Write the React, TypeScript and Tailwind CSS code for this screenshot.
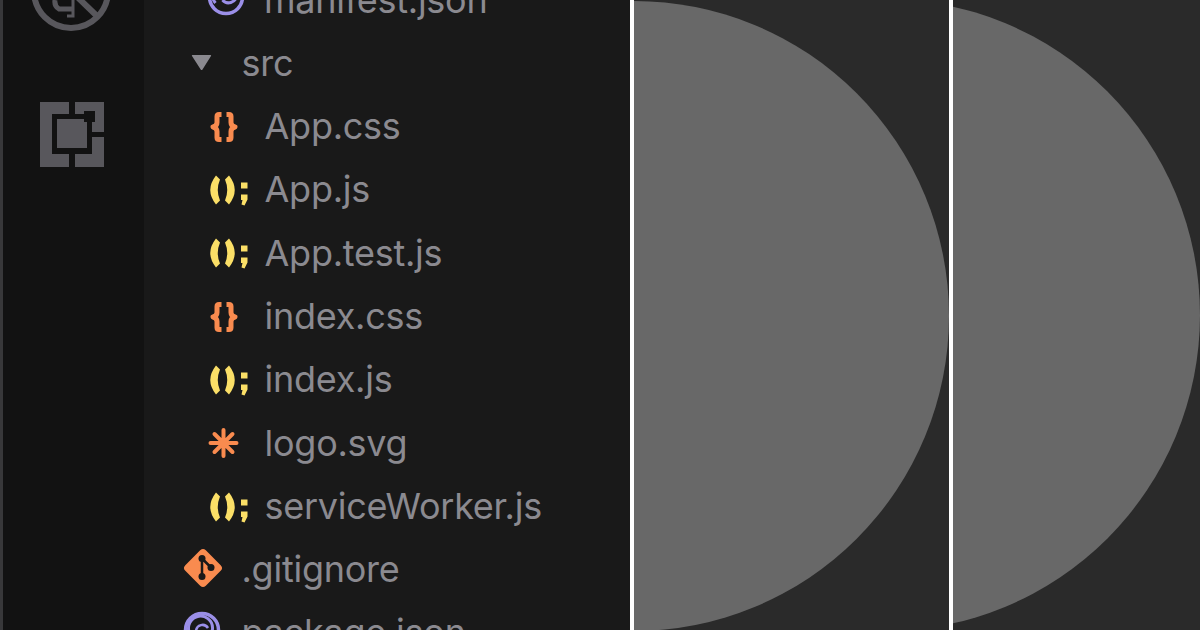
const files = [
  { name: 'manifest.json', icon: 'swirl', indent: 'pl-[63px]', gap: 'w-[57px]' },
  { name: 'src', icon: 'caret', indent: 'pl-[46px]', gap: 'w-[51.500px]' },
  { name: 'App.css', icon: 'css', indent: 'pl-[64px]', gap: 'w-[56.500px]' },
  { name: 'App.js', icon: 'js', indent: 'pl-[64px]', gap: 'w-[56.500px]' },
  { name: 'App.test.js', icon: 'js', indent: 'pl-[64px]', gap: 'w-[56.500px]' },
  { name: 'index.css', icon: 'css', indent: 'pl-[64px]', gap: 'w-[56.500px]' },
  { name: 'index.js', icon: 'js', indent: 'pl-[64px]', gap: 'w-[56.500px]' },
  { name: 'logo.svg', icon: 'star', indent: 'pl-[64px]', gap: 'w-[56.500px]' },
  { name: 'serviceWorker.js', icon: 'js', indent: 'pl-[64px]', gap: 'w-[56.500px]' },
  { name: '.gitignore', icon: 'git', indent: 'pl-[39px]', gap: 'w-[58.500px]' },
  { name: 'package.json', icon: 'swirl', indent: 'pl-[39px]', gap: 'w-[58.500px]' },
]

const FileIcon = ({ icon }: { icon: string }) => {
  if (icon === 'caret') {
    return (
      <svg width="24" height="40" viewBox="0 0 24 40">
        <path d="M2.500 12h18a.6.6 0 0 1 .5 1l-8.500 13.500a1 1 0 0 1-1.800 0L2 13a.6.6 0 0 1 .5-1z" fill="#8a898f" />
      </svg>
    )
  }
  if (icon === 'css') {
    return (
      <svg width="32" height="32" viewBox="0 0 32 32" fill="none" stroke="#f98b4f" strokeWidth="5" strokeLinejoin="round">
        <path d="M13.500 3.500h-2.500q-2 0-2 2v6q0 3.500-4 4.500 4 1 4 4.500v6q0 2 2 2h2.500" />
        <path d="M18.500 3.500h2.500q2 0 2 2v6q0 3.500 4 4.500-4 1-4 4.500v6q0 2-2 2h-2.500" />
      </svg>
    )
  }
  if (icon === 'js') {
    return (
      <svg width="42" height="32" viewBox="0 0 42 32" fill="#fbdf67">
        <path d="M8 1.500l4 4q-4.500 10.500 0 21l-4 4Q-3.500 16 8 1.500z" />
        <path d="M21 1.500l-4 4q4.500 10.500 0 21l4 4Q32.500 16 21 1.500z" />
        <path d="M33 8.500h6.500v6H33zM33 20.500h6.500v5l-3 6-3-1 1-4.500H33z" />
      </svg>
    )
  }
  if (icon === 'star') {
    return (
      <svg width="32" height="32" viewBox="0 0 32 32" stroke="#f98b4f" strokeWidth="4" strokeLinecap="round" fill="#f98b4f">
        <path d="M15.500 3v26M2.500 16h26M6.500 7l18 18M24.500 7l-18 18" />
        <circle cx="15.500" cy="16" r="4" stroke="none" />
      </svg>
    )
  }
  if (icon === 'git') {
    return (
      <svg width="40" height="40" viewBox="0 0 40 40" className="-mt-[4px]">
        <rect x="5.500" y="5.500" width="29" height="29" rx="4" transform="rotate(45 20 20)" fill="#f98b4f" />
        <path d="M19 10.500v18M19 10.500l9 9" stroke="#191919" strokeWidth="2.500" fill="none" />
        <circle cx="19" cy="10.500" r="3.500" fill="#191919" />
        <circle cx="28" cy="19.500" r="3.500" fill="#191919" />
        <circle cx="19" cy="28.500" r="3.500" fill="#191919" />
      </svg>
    )
  }
  return (
    <svg width="38" height="38" viewBox="0 0 38 38" fill="none" stroke="#9b8fe8" className="-mt-[7px]">
      <circle cx="19" cy="19" r="16.500" strokeWidth="3.500" />
      <path d="M8.500 25a12 12 0 1 1 21-7 8 8 0 0 1-14 4" strokeWidth="3" />
      <path d="M13 20a6.500 6.500 0 0 1 12-3" strokeWidth="2.500" />
    </svg>
  )
}

export default function App() {
  return (
    <div className="flex h-[630px] w-[1200px] overflow-hidden bg-black font-['Inter',sans-serif]">
      <div className="h-full w-[3px] bg-[#38383a]" />
      <div className="flex h-full w-[141px] flex-col items-center bg-[#121212]">
        <svg width="84" height="32" viewBox="0 -42 84 74" preserveAspectRatio="xMidYMax slice" className="-ml-[6px] h-[32px] w-[84px]">
          <circle cx="42" cy="-9" r="37" fill="none" stroke="#58575c" strokeWidth="6" />
          <path d="M14 -36L68 16" stroke="#58575c" strokeWidth="6" />
          <path d="M44 9H30a9 9 0 0 1-4-9" fill="none" stroke="#58575c" strokeWidth="5" />
          <path d="M44 -6v22h-6" fill="none" stroke="#58575c" strokeWidth="3" />
        </svg>
        <svg width="64" height="65" viewBox="0 0 64 65" className="mt-[70px] -ml-[4px]">
          <rect width="64" height="65" fill="#58575c" />
          <rect x="29" y="0" width="6" height="12" fill="#121212" />
          <rect x="29" y="52" width="6" height="13" fill="#121212" />
          <rect x="52" y="30" width="12" height="5" fill="#121212" />
          <rect x="12" y="12" width="40" height="40" fill="#121212" />
          <rect x="17" y="17" width="30" height="29" fill="#58575c" />
          <rect x="44" y="9" width="11" height="11" fill="#121212" />
        </svg>
      </div>
      <div className="-mt-[31.5px] h-[700px] w-[486px] bg-[#191919] text-[36px] leading-[63.3px] tracking-[-0.25px] text-[#8b8a90]">
        {files.map((file) => (
          <div key={file.name} className={`flex h-[63.3px] items-center ${file.indent}`}>
            <div className={`flex shrink-0 ${file.gap}`}>
              <FileIcon icon={file.icon} />
            </div>
            <span>{file.name}</span>
          </div>
        ))}
      </div>
      <div className="h-full w-[4px] bg-white" />
      <div className="h-full w-[315px] overflow-hidden bg-[#2a2a2a]">
        <svg width="315" height="630" viewBox="0 0 315 630">
          <circle cx="0" cy="316" r="315" fill="#686868" />
        </svg>
      </div>
      <div className="h-full w-[4px] bg-white" />
      <div className="h-full w-[247px] overflow-hidden bg-[#2a2a2a]">
        <svg width="247" height="630" viewBox="0 0 247 630">
          <circle cx="-69" cy="315" r="316" fill="#686868" />
        </svg>
      </div>
    </div>
  )
}
